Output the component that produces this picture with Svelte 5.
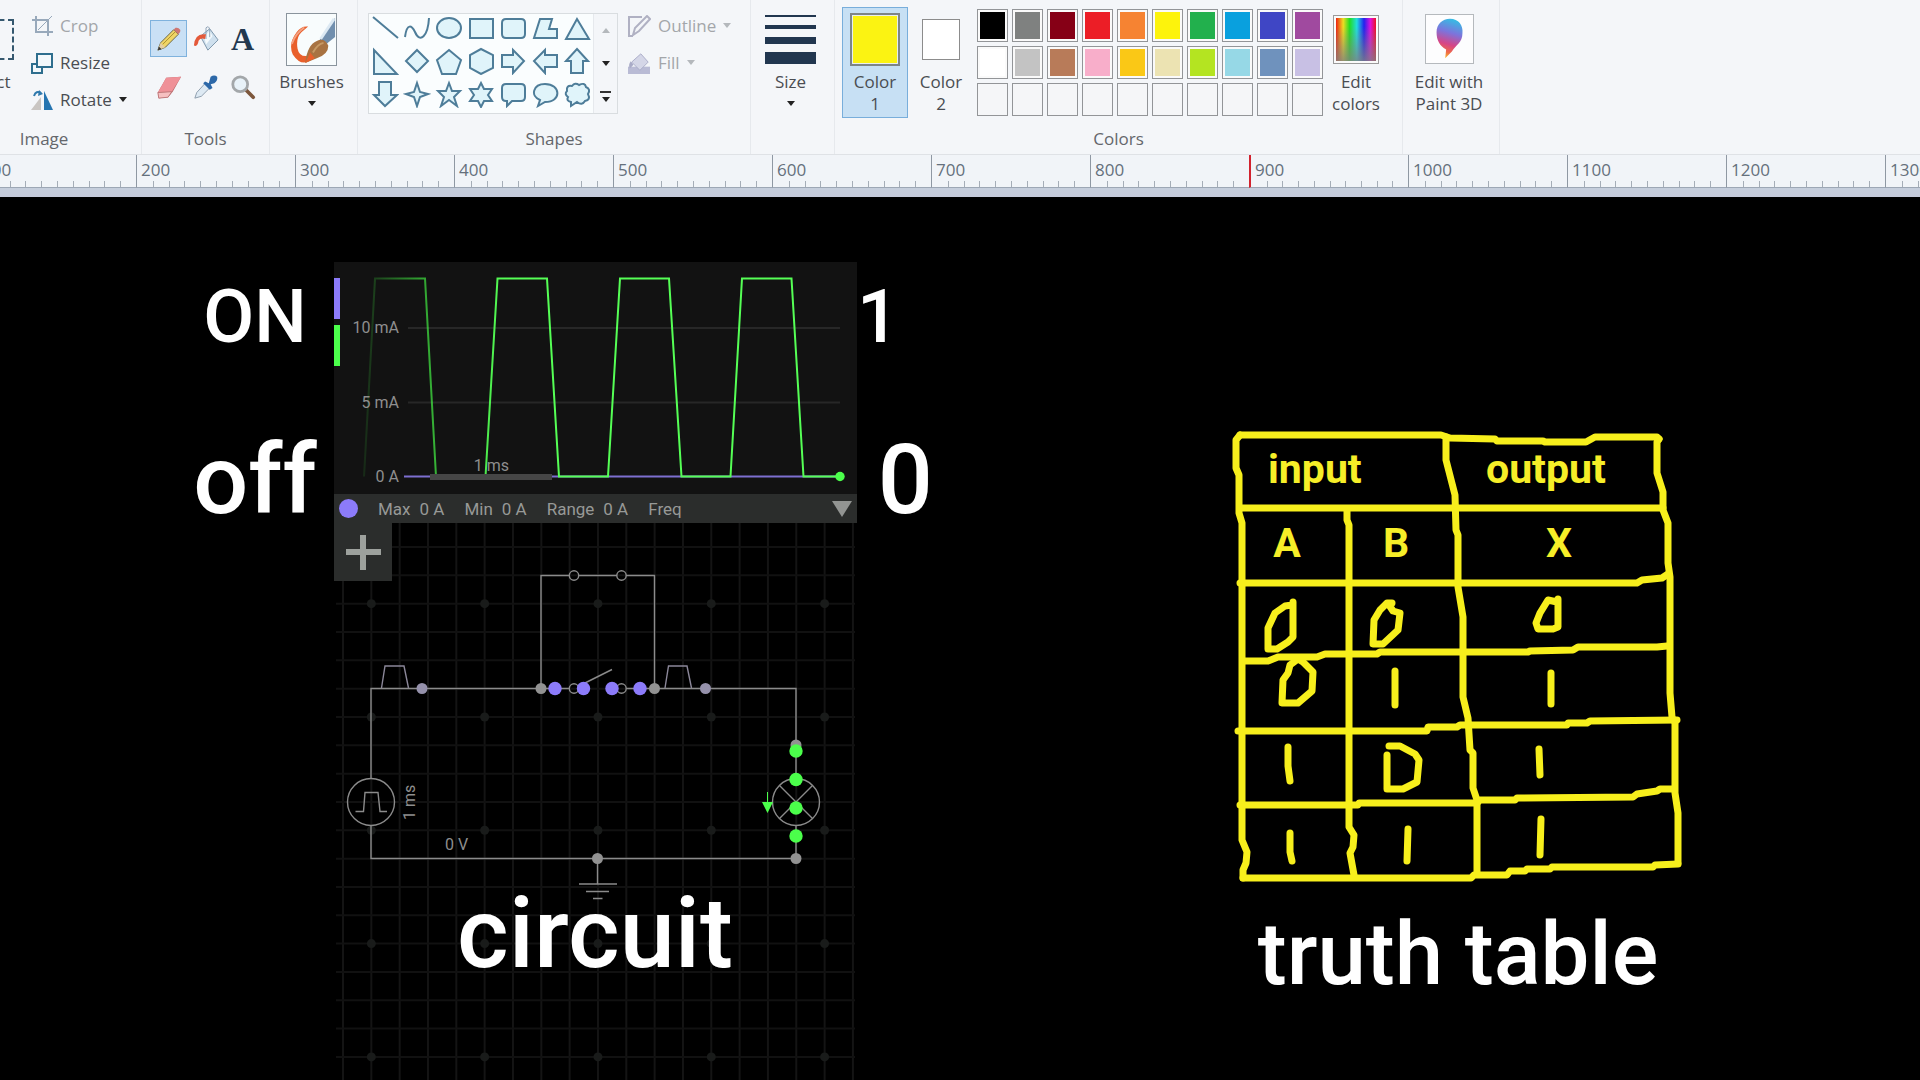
<script lang="ts">
	const palette = [
		'#000000', '#7f8180', '#860016', '#ec1e26', '#f68332', '#fdf30c', '#22b04d', '#09a0de', '#3f46c5', '#a04a9f',
		'#ffffff', '#c3c3c3', '#b87b59', '#f8aeca', '#fac816', '#ece3b2', '#b4e421', '#96d8e6', '#6f92bd', '#c8c0e4',
		'', '', '', '', '', '', '', '', '', ''
	];

	const shapes = [
		{ name: 'Line', d: 'M2 3 L27 24' },
		{ name: 'Curve', d: 'M2 23 C4 8 9 12 12 18 C17 30 25 22 26 4' },
		{ name: 'Oval', d: 'M2 14 A12 10 0 1 1 26 14 A12 10 0 1 1 2 14 Z' },
		{ name: 'Rectangle', d: 'M3 5 H26 V24 H3 Z' },
		{ name: 'Rounded rectangle', d: 'M7 5 H22 Q26 5 26 9 V20 Q26 24 22 24 H7 Q3 24 3 20 V9 Q3 5 7 5 Z' },
		{ name: 'Polygon', d: 'M9 5 H21 L18 15 H26 V24 H3 Z' },
		{ name: 'Triangle', d: 'M14 5 L26 25 H3 Z' },
		{ name: 'Right triangle', d: 'M3 3 L26 27 H3 Z' },
		{ name: 'Diamond', d: 'M14 3 L25 14 L14 25 L3 14 Z' },
		{ name: 'Pentagon', d: 'M14 3 L26 13 L21 27 H7 L2 13 Z' },
		{ name: 'Hexagon', d: 'M14 2 L26 8 V21 L14 27 L3 21 V8 Z' },
		{ name: 'Right arrow', d: 'M3 8 H14 V3 L25 14 L14 26 V20 H3 Z' },
		{ name: 'Left arrow', d: 'M26 8 H14 V3 L3 14 L14 26 V20 H26 Z' },
		{ name: 'Up arrow', d: 'M14 2 L25 14 H20 V26 H8 V14 H3 Z' },
		{ name: 'Down arrow', d: 'M8 2 H20 V15 H26 L14 26 L3 15 H8 Z' },
		{ name: 'Four-point star', d: 'M14 3 L17 12 L25 14 L17 17 L14 26 L11 17 L3 14 L11 12 Z' },
		{ name: 'Five-point star', d: 'M14 3 L17 11 H25 L19 17 L22 26 L14 20 L6 26 L9 17 L3 11 H11 Z' },
		{ name: 'Six-point star', d: 'M14 3 L17 9 H25 L21 15 L25 21 H17 L14 27 L11 21 H3 L7 15 L3 9 H11 Z' },
		{ name: 'Rounded callout', d: 'M7 4 H22 Q26 4 26 8 V17 Q26 21 22 21 H13 L8 26 V21 H7 Q3 21 3 17 V8 Q3 4 7 4 Z' },
		{ name: 'Oval callout', d: 'M9 20 C-1 16 2 4 14 4 C30 4 31 22 14 22 L7 26 Z' },
		{ name: 'Cloud callout', d: 'M8 22 Q3 21 5 17 Q1 14 4 11 Q3 5 9 6 Q12 2 16 5 Q22 2 23 7 Q28 9 25 14 Q28 20 22 21 Q19 26 14 22 L8 26 Z' }
	];

	const rulerMarks = [100, 200, 300, 400, 500, 600, 700, 800, 900, 1000, 1100, 1200, 1300];

	// circuit background grid
	const step = 28.33;
	const gridX = Array.from({ length: 19 }, (_, i) => 9 + i * step);
	const gridY = Array.from({ length: 19 }, (_, i) => 24 + i * step);
	const dotX = gridX.filter((_, i) => i % 4 === 1);
	const dotY = gridY.filter((_, i) => i % 4 === 2);

	const readings = [
		{ label: 'Max', value: '0 A' },
		{ label: 'Min', value: '0 A' },
		{ label: 'Range', value: '0 A' },
		{ label: 'Freq', value: '' }
	];

	// pen strokes of the table, in table coordinates
	const cols = [
		{ x: 0, w: 106 },
		{ x: 106, w: 112 },
		{ x: 218, w: 214 }
	];
	const rowH = 74;
	const truth = [
		[
			{ bit: 0, pts: '51,166 51,201 46,206 35,213 26,213 26,192 33,177 43,170 50,169' },
			{ bit: 0, pts: '150,167 145,167 138,174 132,184 131,208 141,208 156,194 158,177 151,175 147,169' },
			{ bit: 0, pts: '316,163 316,191 311,193 296,193 294,187 298,177 306,164 315,166' }
		],
		[
			{ bit: 0, pts: '56,223 48,229 46,237 41,244 40,267 56,267 70,255 71,236 61,226 56,223' },
			{ bit: 1, pts: '153,235 153,269' },
			{ bit: 1, pts: '309,237 309,268' }
		],
		[
			{ bit: 1, pts: '46,311 46,330 48,345' },
			{ bit: 0, pts: '147,310 158,310 173,318 177,324 175,346 161,353 145,353 145,319' },
			{ bit: 1, pts: '297,313 298,339' }
		],
		[
			{ bit: 1, pts: '48,397 48,416 50,425' },
			{ bit: 1, pts: '166,393 165,425' },
			{ bit: 1, pts: '299,383 298,419' }
		]
	];
	const rules = [
		'-2,-1 -6,4 -6,32 -3,39 -3,77 0,87 0,404 5,416 4,427 1,434 1,442',
		'-2,-1 199,-1 208,2 253,3 255,5 301,5 303,6 344,6 353,1 415,1 417,3',
		'417,3 415,6 415,37 421,56 421,74 426,87 426,127 428,141 428,257 430,281 433,287 433,357 436,377 436,427',
		'204,1 204,24 213,59 214,94 216,99 216,151 221,181 221,261 226,282 228,314 231,317 231,352 235,364 235,437',
		'105,74 105,84 107,89 107,391 112,399 111,411 108,417 112,439',
		'-2,72 421,72',
		'-2,147 395,147 400,144 420,142 426,138',
		'3,225 26,225 36,221 75,221 83,218 135,218 138,216 286,216 288,215 331,214 336,211 415,211 425,210',
		'-4,295 185,295 186,291 215,291 218,289 325,289 326,287 345,287 348,285 435,284',
		'-2,369 116,369 117,367 235,367 238,364 273,364 275,362 391,361 395,358 415,355 418,353 431,353',
		'1,442 229,442 232,439 265,439 268,435 283,435 285,433 308,433 310,431 411,431 413,429 436,428'
	];
</script>

<header class="ribbon">
	<section class="group image">
		<div class="body">
			<button class="big select">
				<span class="pic"><span class="marquee"></span></span>
				Select <i class="caret"></i>
			</button>
			<div class="stack">
				<button class="row off">
					<svg viewBox="0 0 22 22" fill="none" stroke="#98a9bb" stroke-width="2"><path d="M5 1V17H22M1 5H17V21" /><path d="M7 15L21 1" stroke-width="1" /></svg>
					Crop
				</button>
				<button class="row">
					<svg viewBox="0 0 22 22" fill="#f3f8fb" stroke="#2e6e8e" stroke-width="2"><path d="M1 12H11V21H1Z" /><path d="M6 2H21V15H6Z" /></svg>
					Resize
				</button>
				<button class="row">
					<svg viewBox="0 0 22 22"><path d="M0 21H10V8Z" fill="#c9c5c2" /><path d="M13 2V21H22Z" fill="#2574b0" /><path d="M3 7Q5 1 10 4" fill="none" stroke="#2f79ad" stroke-width="2" /><path d="M8 1L12 5L7 7Z" fill="#2f79ad" /></svg>
					Rotate <i class="caret"></i>
				</button>
			</div>
		</div>
		<h2>Image</h2>
	</section>

	<section class="group tools">
		<div class="body">
			<div class="toolgrid">
				<button class="active" aria-label="Pencil">
					<svg viewBox="0 0 28 28"><path d="M2 26L5 18L19 4L24 9L10 23Z" fill="#f0d565" stroke="#66603f" /><path d="M7 20L21 6" stroke="#a58a2c" /><path d="M2 26L5 18L10 23Z" fill="#e5cfa3" /><path d="M2 26L3 22L6 25Z" fill="#333" /><path d="M19 4L21 2Q24 1 26 4Q27 6 24 9Z" fill="#cf7672" /></svg>
				</button>
				<button aria-label="Fill with color">
					<svg viewBox="0 0 28 28"><path d="M8 11L18 3L27 15L16 26Z" fill="#cfe0ee" stroke="#7992a8" /><path d="M12 11L18 5L21 11L14 20Z" fill="#f4fafd" /><path d="M14 14V2Q17 -1 18 4V12" fill="none" stroke="#8ba0b4" /><path d="M14 9Q2 7 1 21Q5 23 6 16Q8 12 13 14Z" fill="#e4593a" /></svg>
				</button>
				<button aria-label="Text"><span class="letter">A</span></button>
				<button aria-label="Eraser">
					<svg viewBox="0 0 28 28"><path d="M2 20L11 4L27 3L18 19L13 25L3 26Z" fill="#b96569" /><path d="M2 20L11 4L27 3L17 19Z" fill="#ef9198" /><path d="M2 20L17 19L13 25L3 26Z" fill="#f6c0c1" stroke="#bd7678" /></svg>
				</button>
				<button aria-label="Color picker">
					<svg viewBox="0 0 28 28"><path d="M2 26L4 20L14 9L19 14L9 24Z" fill="#dde9f3" stroke="#8999aa" /><path d="M13 8L17 10L19 3Q23 0 26 3Q27 7 23 10L19 11L21 15L18 17L11 10Z" fill="#2d68a8" /></svg>
				</button>
				<button aria-label="Magnifier">
					<svg viewBox="0 0 28 28"><path d="M17 17L25 25" stroke="#7d573c" stroke-width="4" stroke-linecap="round" /><circle cx="11" cy="11" r="8" fill="#e8f2f9" stroke="#a3a7aa" stroke-width="3" /></svg>
				</button>
			</div>
		</div>
		<h2>Tools</h2>
	</section>

	<section class="group brushes">
		<div class="body">
			<button class="big">
				<span class="pic">
					<svg class="framed" width="51" height="53" viewBox="0 0 51 53"><rect width="51" height="53" fill="#f8fcfd" /><path d="M22 13Q15 12 10 19Q1 31 6 42Q14 54 23 49L24 43Q13 46 11 36Q9 25 15 19Z" fill="#e9602c" /><path d="M18 14Q9 20 5 31" fill="none" stroke="#f3a182" stroke-width="2" /><path d="M34 27L50 4V24L40 32Z" fill="#718fae" /><path d="M35 26L49 5" stroke="#dce9f3" stroke-width="3" /><path d="M19 51Q21 32 31 28Q39 24 43 33Q43 42 31 46Z" fill="#a87342" /><path d="M19 51L24 40L29 46Z" fill="#e9602c" /><path d="M27 40Q32 31 38 30" fill="none" stroke="#c79a65" stroke-width="2" /></svg>
				</span>
				Brushes <i class="caret"></i>
			</button>
		</div>
	</section>

	<section class="group shapes">
		<div class="body">
			<div class="gallery">
				<div class="shapegrid">
					{#each shapes as s}
						<button aria-label={s.name}>
							<svg viewBox="0 0 28 28"><path d={s.d} fill={s.d.endsWith('Z') ? '#e0f4fa' : 'none'} stroke="#4e7d99" stroke-width="2" /></svg>
						</button>
					{/each}
				</div>
				<div class="scroll">
					<button aria-label="Row up"><i class="caret up"></i></button>
					<button aria-label="Row down"><i class="caret"></i></button>
					<button aria-label="More shapes" class="more"><i class="caret"></i></button>
				</div>
			</div>
			<div class="stack">
				<button class="row off">
					<svg viewBox="0 0 24 22" fill="none" stroke="#b0b1c3" stroke-width="2"><path d="M15 2H2V21H6" /><path d="M6 20L8 13L20 1L23 4L12 16Z" /></svg>
					Outline <i class="caret"></i>
				</button>
				<button class="row off">
					<svg viewBox="0 0 24 24"><path d="M0 16H24V24H0Z" fill="#b9bbd5" /><path d="M4 11L14 2L22 11L13 20Z" fill="#d4d6e7" stroke="#a9abc7" /><path d="M3 10Q0 14 2 18L6 14Z" fill="#a9abc7" /></svg>
					Fill <i class="caret"></i>
				</button>
			</div>
		</div>
		<h2>Shapes</h2>
	</section>

	<section class="group size">
		<div class="body">
			<button class="big">
				<span class="pic"><span class="weights"><b></b><b></b><b></b><b></b></span></span>
				Size <i class="caret"></i>
			</button>
		</div>
	</section>

	<section class="group colors">
		<div class="body">
			<button class="big chosen">
				<span class="pic"><span class="well first"></span></span>
				Color<br />1
			</button>
			<button class="big second">
				<span class="pic"><span class="well"></span></span>
				Color<br />2
			</button>
			<div class="palette">
				{#each palette as c, i}
					<button class="swatch" class:empty={!c} aria-label="Swatch {i + 1}">
						{#if c}<span style:background={c}></span>{/if}
					</button>
				{/each}
			</div>
			<button class="big edit">
				<span class="pic"><span class="spectrum"></span></span>
				Edit<br />colors
			</button>
		</div>
		<h2>Colors</h2>
	</section>

	<section class="group paint">
		<div class="body">
			<button class="big">
				<span class="pic">
					<svg class="framed light" width="49" height="50" viewBox="0 0 49 50">
						<defs>
							<linearGradient id="drop" x1="0.6" y1="0" x2="0.4" y2="1">
								<stop offset="0" stop-color="#35bde4" />
								<stop offset="0.35" stop-color="#7c74dc" />
								<stop offset="0.65" stop-color="#d64487" />
								<stop offset="0.85" stop-color="#ef6a45" />
								<stop offset="1" stop-color="#f7b733" />
							</linearGradient>
						</defs>
						<rect width="49" height="50" fill="#fdfdfe" />
						<path d="M25 4C34 4 39 11 38 19C38 29 31 31 27 38L20 45L21 36C14 32 11 26 11 18C11 10 17 4 25 4Z" fill="url(#drop)" />
					</svg>
				</span>
				Edit with<br />Paint 3D
			</button>
		</div>
	</section>
</header>

<div class="ruler">
	{#each rulerMarks as m}
		<div class="mark" class:cursor={m === 900}>
			<span>{m}</span>
			<div class="ticks">{#each Array(10) as _}<i></i>{/each}</div>
		</div>
	{/each}
</div>

<main>
	<div class="levels left">
		<p>ON</p>
		<p class="low">off</p>
	</div>

	<section class="sim">
		<svg class="scope" width="523" height="232" viewBox="0 0 523 232">
			<defs>
				<linearGradient id="fade" gradientUnits="userSpaceOnUse" x1="30" y1="0" x2="170" y2="0">
					<stop offset="0" stop-color="#4f4" stop-opacity="0.1" />
					<stop offset="0.4" stop-color="#4f4" stop-opacity="0.6" />
					<stop offset="1" stop-color="#5f5" />
				</linearGradient>
			</defs>
			<path d="M74 66H506M74 140.5H506" stroke="#272727" stroke-width="2" />
			<rect y="16" width="6" height="41" fill="#8c7bfa" />
			<rect y="63" width="6" height="41" fill="#4bff4b" />
			<path d="M70 214.5H506" stroke="#7d6fd0" stroke-width="2" />
			<path d="M30 214.5L41 16.5H91L102 214.5H151.5L163.5 16.5H213L225 214.5H274L286 16.5H335L347.5 214.5H396.5L408 16.5H457.5L469.5 214.5H506" fill="none" stroke="url(#fade)" stroke-width="2" />
			<rect x="96" y="212" width="122" height="6" fill="#464646" />
			<circle cx="506" cy="214.5" r="4.7" fill="#4bff4b" />
			<g class="axis">
				<text x="65" y="71">10 mA</text>
				<text x="65" y="146">5 mA</text>
				<text x="65" y="220">0 A</text>
				<text x="175" y="209">1 ms</text>
			</g>
		</svg>
		<div class="stats">
			<i class="probe"></i>
			{#each readings as r}
				<span>{r.label}{#if r.value}<b>{r.value}</b>{/if}</span>
			{/each}
			<button aria-label="Collapse"></button>
		</div>
		<div class="board">
			<button class="add" aria-label="Add">
				<svg width="58" height="58" viewBox="0 0 58 58"><path d="M12 29H47M29 12V47" stroke="#9da19d" stroke-width="6" /></svg>
			</button>
			<svg class="circuit" width="523" height="557" viewBox="0 0 523 557">
				{#each gridX as x}<path d="M{x} 0V557" stroke="#141414" stroke-width="2" />{/each}
				{#each gridY as y}<path d="M2 {y}H521" stroke="#111" stroke-width="2" />{/each}
				{#each dotX as x}{#each dotY as y}<circle cx={x} cy={y} r="4.5" fill="#191b1a" />{/each}{/each}
				<g fill="none" stroke="#8b8b8b" stroke-width="1.4">
					<path d="M37 255V165.5H235M292 165.5H462V255M37 303V335.5H462V303" />
					<path d="M207 165.5V52.5H235M245 52.5H283M292 52.5H320.5V165.5" />
					<circle cx="240" cy="52.5" r="4.7" />
					<circle cx="287.5" cy="52.5" r="4.7" />
					<circle cx="240" cy="165.5" r="4.7" />
					<circle cx="287.5" cy="165.5" r="4.7" />
					<path d="M245 163L278 146.5" />
					<path d="M47.5 165L51 143H70L74.5 165M331 165L334.5 143H353L357.5 165" stroke="#8b8799" />
					<circle cx="37" cy="279" r="23.5" />
					<path d="M21.5 288.5H29.5L31 269.5H44L46 288.5H53" />
					<circle cx="462" cy="279" r="23.5" />
					<path d="M445.5 262.5L478.5 295.5M478.5 262.5L445.5 295.5" />
					<path d="M263.5 335V361M245 361H283M252 368.5H275M259 375.5H268.5" />
				</g>
				<g fill="#929292">
					<circle cx="207" cy="165.5" r="5.5" />
					<circle cx="320.5" cy="165.5" r="5.5" />
					<circle cx="462" cy="222" r="5.5" />
					<circle cx="462" cy="335.5" r="5.5" />
					<circle cx="263.5" cy="335.5" r="5.5" />
				</g>
				<g fill="#9591ab">
					<circle cx="88" cy="165.5" r="5.5" />
					<circle cx="371.5" cy="165.5" r="5.5" />
				</g>
				<g fill="#8c7bfa">
					{#each [221, 249.5, 278, 306] as x}<circle cx={x} cy="165.5" r="6.7" />{/each}
				</g>
				<g fill="#4bff4b">
					{#each [228, 256.5, 285, 313] as y}<circle cx="462" cy={y} r="6.7" />{/each}
					<path d="M433 269H434V279H439L433.5 290L428 279H433Z" />
				</g>
				<g class="axis note">
					<text x="111" y="327">0 V</text>
					<text transform="translate(81 297) rotate(-90)">1 ms</text>
				</g>
				<text class="title" x="261" y="444">circuit</text>
			</svg>
		</div>
	</section>

	<div class="levels right">
		<p>1</p>
		<p class="low">0</p>
	</div>

	<figure>
		<div class="sheet">
			<table>
				<colgroup>
					<col class="a" />
					<col class="b" />
					<col class="x" />
				</colgroup>
				<thead>
					<tr><th colspan="2" class="wide">input</th><th class="wide">output</th></tr>
					<tr><th>A</th><th>B</th><th>X</th></tr>
				</thead>
				<tbody>
					{#each truth as line, r}
						<tr>
							{#each line as cell, c}
								<td>
									<svg class="pen" role="img" aria-label={String(cell.bit)} viewBox="{cols[c].x} {(r + 2) * rowH} {cols[c].w} {rowH}">
										<polyline points={cell.pts} />
									</svg>
								</td>
							{/each}
						</tr>
					{/each}
				</tbody>
			</table>
			<svg class="pen rules" viewBox="0 0 432 444">
				{#each rules as pts}<polyline points={pts} />{/each}
			</svg>
		</div>
		<figcaption>truth table</figcaption>
	</figure>
</main>

<style>
	:global(body) {
		margin: 0;
		background: #000;
		overflow: hidden;
	}
	:global(#app) * {
		box-sizing: border-box;
	}
	button {
		font: inherit;
		color: inherit;
		background: none;
		border: 0;
		padding: 0;
		margin: 0;
	}
	svg { display: block; }

	/* ribbon */
	.ribbon {
		display: flex;
		height: 155px;
		overflow: hidden;
		background: #f4f6f9;
		border-bottom: 1px solid #dfe2e6;
		font: 17px/22px "Open Sans", "Noto Sans", sans-serif;
		color: #4a4d52;
	}
	.group {
		display: flex;
		flex-direction: column;
		flex-shrink: 0;
		padding: 7px 0 3px;
		border-right: 1px solid #e6e9ed;
	}
	.body {
		display: flex;
		flex: 1;
		justify-content: center;
		align-items: flex-start;
	}
	h2 {
		margin: 0;
		font-size: 17px;
		line-height: 24px;
		font-weight: 400;
		text-align: center;
		color: #64676c;
	}
	.image { width: 195px; margin-left: -53px; }
	.tools { width: 128px; }
	.brushes { width: 88px; }
	.shapes { width: 393px; }
	.size { width: 84px; }
	.colors { width: 568px; }
	.paint { width: 97px; }
	.brushes .body, .size .body, .paint .body { padding-right: 4px; }

	.big {
		display: block;
		height: 111px;
		border: 1px solid transparent;
		padding: 4px 0 2px;
		text-align: center;
		white-space: nowrap;
	}
	.pic {
		display: flex;
		align-items: center;
		justify-content: center;
		height: 54px;
		margin-bottom: 5px;
	}
	.caret {
		display: inline-block;
		border: 4px solid transparent;
		border-top: 5px solid #222;
		border-bottom: 0;
	}
	.big .caret { display: block; width: 8px; margin: 8px auto 9px; }
	.caret.up { border-top: 0; border-bottom: 5px solid #b4b8bc; }
	.select { width: 60px; }
	.image .body { justify-content: flex-start; padding-left: 10px; }
	.marquee { width: 54px; height: 41px; border: 2px dashed #35586f; }
	.stack { display: flex; flex-direction: column; }
	.image .stack { padding-left: 14px; }
	.row {
		display: flex;
		align-items: center;
		gap: 7px;
		height: 37px;
	}
	.row svg { width: 22px; height: 22px; }
	.off { color: #a3a6aa; }
	.off .caret { border-top-color: #b4b8bc; }

	.toolgrid {
		display: grid;
		grid-template-columns: repeat(3, 37px);
		grid-auto-rows: 37px;
		row-gap: 11px;
		padding-top: 13px;
	}
	.toolgrid button {
		display: flex;
		align-items: center;
		justify-content: center;
		border: 1px solid transparent;
	}
	.toolgrid .active { background: #c9e0f5; border-color: #7fb2dd; }
	.toolgrid svg { width: 26px; height: 26px; }
	.letter { font: bold 32px/34px "Liberation Serif", serif; color: #22384f; }
	.framed { border: 1px solid #8a949d; }
	.light { border-color: #b5b9bd; }

	.shapes .body { justify-content: flex-start; padding: 6px 0 0 10px; }
	.gallery { display: flex; border: 1px solid #d9dde0; background: #fafdfe; }
	.shapegrid { display: grid; grid-template-columns: repeat(7, 32px); grid-auto-rows: 33px; }
	.shapegrid button { display: flex; align-items: flex-start; justify-content: center; }
	.shapegrid svg { width: 28px; height: 28px; }
	.scroll {
		display: flex;
		flex-direction: column;
		width: 24px;
		background: #f4f6f9;
		border-left: 1px solid #e6e9ed;
	}
	.scroll button { display: flex; flex: 1; flex-direction: column; align-items: center; justify-content: center; }
	.scroll .more::before { content: ""; width: 11px; height: 2px; margin-bottom: 4px; background: #333; }
	.shapes .stack { padding-left: 9px; margin-top: -6px; }
	.shapes .row svg { width: 24px; }

	.weights { display: flex; flex-direction: column; gap: 8px; width: 51px; }
	.weights b { height: 2px; background: #21364f; }
	.weights b:nth-child(2) { height: 4px; }
	.weights b:nth-child(3) { height: 7px; }
	.weights b:nth-child(4) { height: 12px; }

	.colors .body { justify-content: flex-start; padding-left: 7px; }
	.colors .big { width: 66px; }
	.colors .chosen { background: #c7e0f4; border-color: #78aedb; }
	.well { width: 38px; height: 41px; background: #fff; border: 1px solid #8c8c8c; }
	.first {
		width: 50px;
		height: 53px;
		background: #fbf312;
		border: 2px solid #7d8588;
		box-shadow: inset 0 0 0 1px #e8eef0;
	}
	.palette {
		display: grid;
		grid-template-columns: repeat(10, 31px);
		grid-auto-rows: 33px;
		gap: 4px;
		padding: 2px 0 0 3px;
	}
	.swatch { padding: 2px; border: 1px solid #939598; background: #fafafa; }
	.swatch span { display: block; height: 100%; }
	.swatch.empty { background: #f5f6f8; }
	.spectrum {
		width: 46px;
		height: 49px;
		border: 1px solid #9a9a9a;
		padding: 2px;
		background:
			linear-gradient(transparent 20%, #808080cc) content-box,
			linear-gradient(90deg, #e21, #ed2 18%, #2d2 34%, #2dd 52%, #22e 70%, #d1d 86%, #e12) content-box,
			#fafafa;
	}
	.paint .big { width: 90px; }

	/* ruler */
	.ruler {
		display: flex;
		height: 42px;
		padding-bottom: 9px;
		overflow: hidden;
		background: linear-gradient(#c5cedc, #c5cadb) bottom / 100% 9px no-repeat, #f1f4f8;
		font: 17px/22px "Open Sans", "Noto Sans", sans-serif;
		color: #65707c;
	}
	.mark {
		display: flex;
		flex-direction: column;
		flex: 0 0 159px;
		height: 33px;
		border-left: 1px solid #8f98a3;
		border-bottom: 1px solid #9da7b5;
	}
	.mark:first-child { margin-left: -23px; }
	.mark.cursor { border-left: 2px solid #d2222e; }
	.mark span { padding: 4px 0 0 4px; }
	.ticks { display: flex; height: 6px; }
	.ticks i { flex: 1; border-left: 1px solid #a5adb7; }
	.ticks i:first-child { border-color: transparent; }

	/* canvas */
	main {
		display: flex;
		align-items: flex-start;
		padding-top: 65px;
		background: #000;
		color: #fff;
		font-family: Roboto, sans-serif;
	}
	.levels {
		display: flex;
		flex-direction: column;
		flex-shrink: 0;
		align-items: center;
		gap: 73px;
		padding-top: 15px;
		font-size: 74px;
		line-height: 80px;
		font-weight: 500;
	}
	.levels p { margin: 0; }
	.levels .low { font-size: 97px; line-height: 100px; }
	.left { width: 334px; padding-left: 176px; }
	.right { width: 76px; align-items: flex-start; }
	.right .low { align-self: flex-end; }

	.sim { width: 523px; flex-shrink: 0; }
	.scope { background: #121212; }
	.axis { font: 16px Roboto, sans-serif; fill: #8e8e8e; text-anchor: end; }
	.note { text-anchor: start; }
	.stats {
		display: flex;
		align-items: center;
		gap: 20px;
		height: 29px;
		padding: 0 5px;
		background: #2b2d2c;
		color: #979997;
		font-size: 17px;
	}
	.stats b { font-weight: 400; margin-left: 9px; }
	.probe { width: 19px; height: 19px; border-radius: 50%; background: #8c7bfa; }
	.stats button {
		margin-left: auto;
		border: 10px solid transparent;
		border-top: 16px solid #929492;
		border-bottom: 0;
	}
	.board { position: relative; }
	.add { position: absolute; top: 0; left: 0; background: #2b2d2c; }
	.title { font: 500 99px Roboto, sans-serif; fill: #fff; text-anchor: middle; }

	figure {
		margin: 174px 246px 0 auto;
	}
	.sheet { position: relative; width: 432px; }
	table {
		width: 100%;
		table-layout: fixed;
		border-collapse: collapse;
		color: #f6ee28;
		font-size: 41px;
	}
	.a { width: 106px; }
	.b { width: 112px; }
	tr { height: 74px; }
	th, td { padding: 0; }
	th { padding-right: 16px; line-height: 66px; font-weight: 700; vertical-align: top; }
	.wide { padding-left: 26px; text-align: left; }
	.pen {
		width: 100%;
		height: 74px;
		overflow: visible;
		fill: none;
		stroke: #f7ef1c;
		stroke-width: 7px;
		stroke-linecap: round;
		stroke-linejoin: round;
	}
	.rules { position: absolute; inset: 0; height: 100%; }
	figcaption {
		margin-top: 24px;
		font-size: 87px;
		line-height: 100px;
		font-weight: 500;
		text-align: center;
	}
</style>
